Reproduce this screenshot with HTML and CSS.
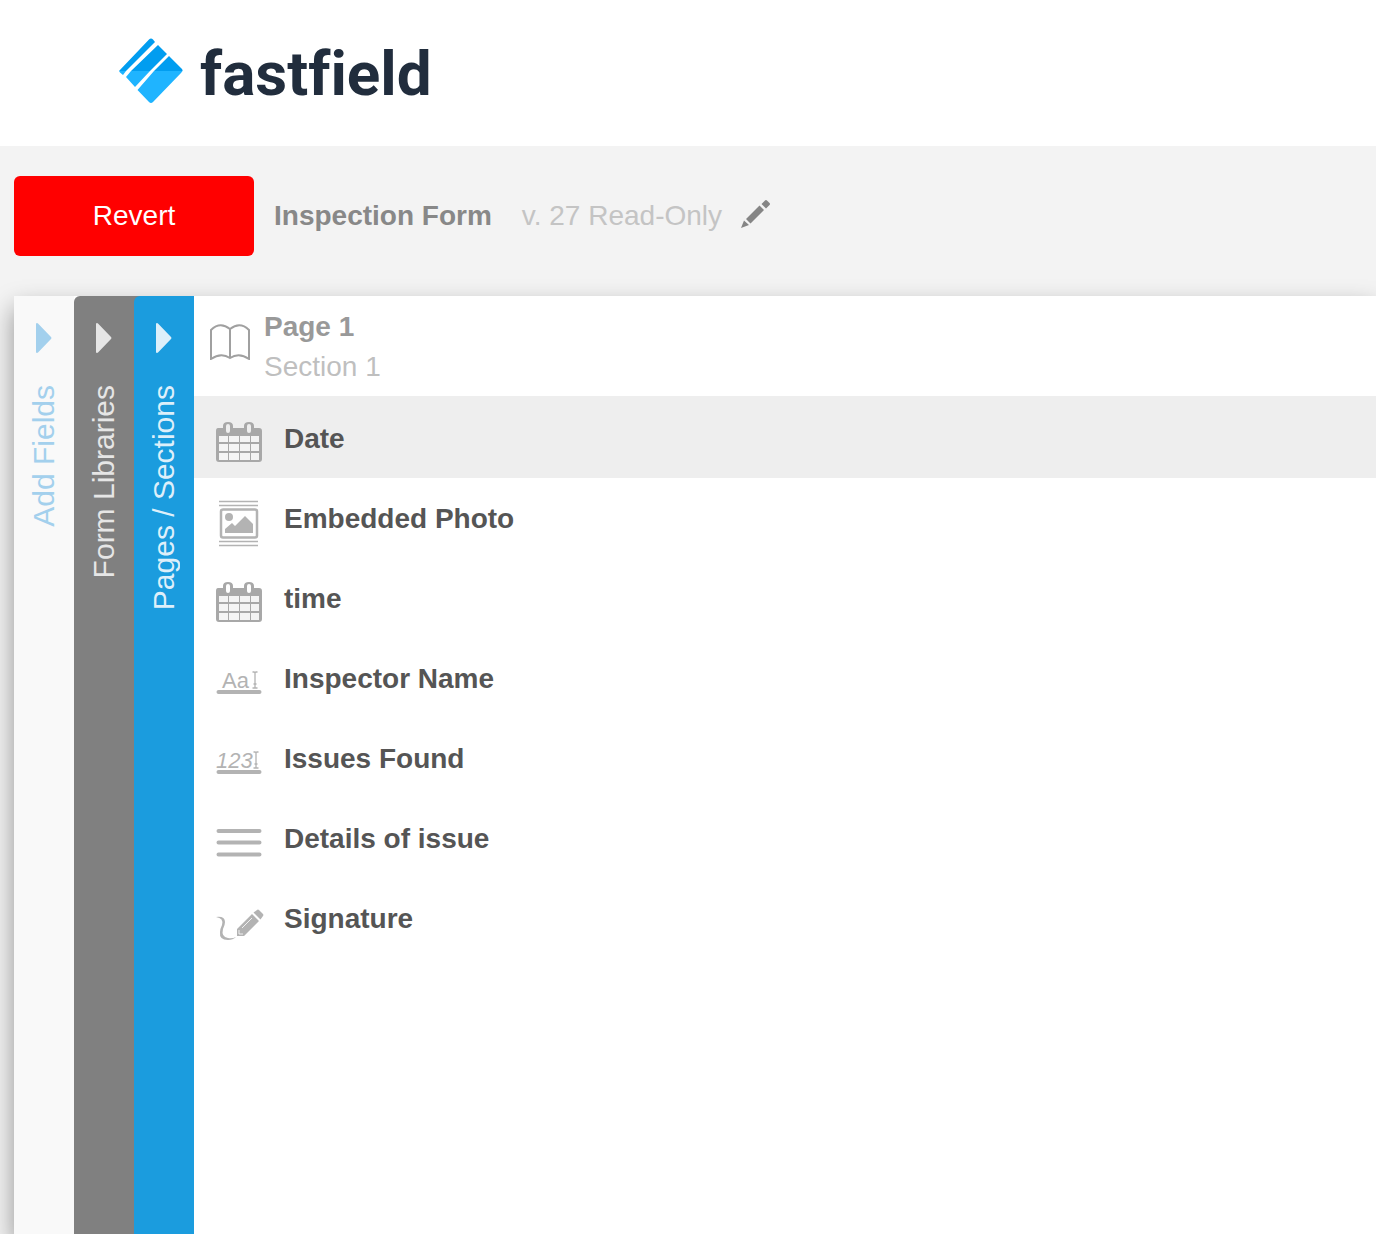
FILE: index.html
```html
<!doctype html>
<html lang="en">
    <head>
        <meta charset="UTF-8" />
        <meta name="viewport" content="width=device-width, initial-scale=1.0" />
        <title>Inspection Form</title>
        <link rel="stylesheet" href="styles.css">
    </head>
    <body>
        <!-- shared icons -->
        <svg class="sprite" width="0" height="0" aria-hidden="true">
            <symbol id="icon-calendar" viewBox="0 0 48 42">
                <path fill="#a8a8a8" fill-rule="evenodd" d="M3 7H8V5Q8 1 13 1T18 5V7H29V5Q29 1 34 1T39 5V7H44Q47 7 47 10V38Q47 41 44 41H4Q1 41 1 38V10Q1 7 3 7ZM11 5V10Q11 12 13 12T15 10V5Q15 3 13 3T11 5ZM32 5V10Q32 12 34 12T36 10V5Q36 3 34 3T32 5Z" />
                <path fill="#f4f4f4" d="M4 15h9v6H4zM14 15h10v6H14zM25 15h10v6H25zM36 15h8v6H36zM4 23h9v7H4zM14 23h10v7H14zM25 23h10v7H25zM36 23h8v7H36zM4 32h9v7H4zM14 32h10v7H14zM25 32h10v7H25zM36 32h8v7H36z" />
            </symbol>
            <symbol id="icon-arrow" viewBox="0 0 16 30">
                <path d="M0 1Q0 0 1 0L2 0.5L15 14Q16 15 15 16L2 29.5L1 30Q0 30 0 29Z" fill="currentColor" />
            </symbol>
            <symbol id="icon-cursor" viewBox="0 0 6 18">
                <path d="M0.5 1H2Q3 1 3 2Q3 1 4 1H5.5M3 2V16M0.5 17H2Q3 17 3 16Q3 17 4 17H5.5M1.5 13H4.5" fill="none" stroke="#b3b3b3" stroke-width="1.3" />
            </symbol>
        </svg>

        <header class="header">
            <a class="logo" href="#">
                <svg class="logo-mark" viewBox="0 0 64 66" aria-hidden="true">
                    <path fill="#019df0" d="M0 33L30 1.5Q32 -0.5 34 1.5L36 4L7 33ZM39 7L48 16L31 33H12ZM50 18L62 30Q64 31.5 63.5 33H35Z" />
                    <path fill="#1fb4ff" d="M0 33H7L4 37L1 34.5ZM12 33H31L16 49L7 39ZM35 33H63.5L62 35L34 64Q32 66 30 64L18.500 52Z" />
                </svg>
                <span class="logo-text">fastfield</span>
            </a>
        </header>

        <section class="toolbar">
            <button class="revert-button" type="button">Revert</button>
            <h1>Inspection Form</h1>
            <span class="version">v. 27 Read-Only</span>
            <button class="edit-button" type="button" aria-label="Edit name">
                <svg width="30" height="30" viewBox="0 0 30 30" fill="#858585">
                    <path d="M0 29L3 21.500L8 26ZM5 20L18.500 6.500L23 11L9.500 24.500ZM20.500 5L24 1.500Q25 0.500 26.500 2L28.500 4Q29.500 5 28.500 6L25 9.500Z" />
                </svg>
            </button>
        </section>

        <main class="builder">
            <button class="tab tab-fields" type="button">
                <svg class="tab-arrow"><use href="#icon-arrow" /></svg>
                <span class="tab-label">Add Fields</span>
            </button>
            <button class="tab tab-libraries" type="button">
                <svg class="tab-arrow"><use href="#icon-arrow" /></svg>
                <span class="tab-label">Form Libraries</span>
            </button>
            <button class="tab tab-pages" type="button">
                <svg class="tab-arrow"><use href="#icon-arrow" /></svg>
                <span class="tab-label">Pages / Sections</span>
            </button>

            <section class="form-page">
                <div class="page-header">
                    <svg class="book" viewBox="0 0 40 36" fill="none" stroke="#a0a0a0" stroke-width="2" aria-hidden="true">
                        <path d="M1 35V6Q10 -3 20 5Q30 -3 39 6V35Q29 28 20 34Q11 28 1 35ZM20 5V34" />
                    </svg>
                    <div>
                        <h2>Page 1</h2>
                        <p>Section 1</p>
                    </div>
                </div>
                <ul class="fields">
                    <li class="field selected">
                        <svg class="field-icon"><use href="#icon-calendar" width="48" height="42" y="2" /></svg>
                        <span>Date</span>
                    </li>
                    <li class="field">
                        <svg class="field-icon" viewBox="0 0 48 48">
                            <path d="M4 2.500H43M4 6.500H43M4 42.500H43M4 46.500H43" stroke="#b3b3b3" stroke-width="1.500" />
                            <rect x="6" y="10.500" width="36" height="28" rx="2" fill="none" stroke="#b3b3b3" stroke-width="2.500" />
                            <circle cx="14" cy="18" r="4" fill="#b3b3b3" />
                            <path d="M10 34V30L17 24L20 27L30 17L38 25V34Z" fill="#b3b3b3" />
                        </svg>
                        <span>Embedded Photo</span>
                    </li>
                    <li class="field">
                        <svg class="field-icon"><use href="#icon-calendar" width="48" height="42" y="2" /></svg>
                        <span>time</span>
                    </li>
                    <li class="field">
                        <svg class="field-icon" viewBox="0 0 48 48">
                            <text class="icon-text" x="7" y="29">Aa</text>
                            <use href="#icon-cursor" x="37" y="12" width="6" height="18" />
                            <path d="M3.500 33H44.500" stroke="#b3b3b3" stroke-width="4" stroke-linecap="round" />
                        </svg>
                        <span>Inspector Name</span>
                    </li>
                    <li class="field">
                        <svg class="field-icon" viewBox="0 0 48 48">
                            <text class="icon-text icon-italic" x="1" y="29">123</text>
                            <use href="#icon-cursor" x="38" y="12" width="6" height="18" />
                            <path d="M3.500 33H44.500" stroke="#b3b3b3" stroke-width="4" stroke-linecap="round" />
                        </svg>
                        <span>Issues Found</span>
                    </li>
                    <li class="field">
                        <svg class="field-icon" viewBox="0 0 48 48">
                            <path d="M3.500 12H44.500M3.500 23.500H44.500M3.500 35.500H44.500" stroke="#b3b3b3" stroke-width="4" stroke-linecap="round" />
                        </svg>
                        <span>Details of issue</span>
                    </li>
                    <li class="field">
                        <svg class="field-icon" viewBox="0 0 48 48">
                            <path d="M1 18Q10 17 10 23Q10 26 8 30Q6 38 13 39Q17 40 21 38Q18 41 13 41Q4 41 5 33Q5 30 7 26Q9 19 1 18Z" fill="#b3b3b3" />
                            <path d="M22 37V30L37 15L44 22L29 37ZM38.500 13.500L42 11Q43 10 44.500 11.500L47.500 14.500Q49 16 48 17L45.500 20.500Z" fill="#b3b3b3" />
                            <path d="M27 29L37 19M24 31V35H28" fill="none" stroke="#fff" stroke-width="0.8" />
                        </svg>
                        <span>Signature</span>
                    </li>
                </ul>
            </section>
        </main>
    </body>
</html>
```
FILE: styles.css
```css
* {
    box-sizing: border-box;
}
body {
    display: flex;
    flex-direction: column;
    min-height: 100vh;
    margin: 0;
    background-color: #f3f3f3;
    font-family: "Liberation Sans", Arial, sans-serif;
    font-size: 28px;
    line-height: 40px;
}
h1,
h2,
p {
    margin: 0;
    font-size: 28px;
}
button {
    border: none;
    padding: 0;
    background: transparent;
    font: inherit;
    cursor: pointer;
}
.sprite {
    position: absolute;
}
.header {
    display: flex;
    padding: 34px 119px 32px;
    background-color: #fff;
}
.logo {
    display: flex;
    align-items: center;
    gap: 17px;
    color: #212d3d;
    text-decoration: none;
}
.logo-mark {
    width: 64px;
    height: 66px;
    margin-bottom: 6px;
}
.logo-text {
    font-family: Roboto, sans-serif;
    font-size: 62px;
    font-weight: bold;
    font-variant-ligatures: none;
    line-height: 80px;
}
.toolbar {
    display: flex;
    align-items: center;
    padding: 30px 14px 40px;
    line-height: 42px;
}
.revert-button {
    width: 240px;
    height: 80px;
    margin-right: 20px;
    border-radius: 6px;
    background-color: #f00;
    color: #fff;
}
.toolbar h1 {
    margin-right: 30px;
    color: #888;
}
.version {
    margin-right: 19px;
    color: #c4c4c4;
}
.edit-button {
    display: flex;
    padding-bottom: 4px;
}
.builder {
    display: flex;
    flex: 1;
    margin-left: 14px;
    background-color: #fff;
    box-shadow: 0 12px 24px rgba(0, 0, 0, 0.4);
}
.tab {
    display: flex;
    flex-direction: column;
    align-items: center;
    gap: 32px;
    width: 60px;
    padding-top: 27px;
}
.tab-arrow {
    width: 16px;
    height: 30px;
}
.tab-label {
    writing-mode: vertical-rl;
    transform: rotate(180deg);
    font-size: 30px;
    line-height: 32px;
    white-space: nowrap;
}
.tab-fields {
    background-color: #f9f9f9;
    color: #a3d0ed;
}
/* runs on under the rounded corner of the next tab */
.tab-libraries {
    width: 66px;
    margin-right: -6px;
    padding-right: 6px;
    border-top-left-radius: 6px;
    background-color: #808080;
    color: #e6e6e6;
}
.tab-pages {
    position: relative;
    border-top-left-radius: 6px;
    background-color: #1b9cde;
    color: #ddeffa;
}
.form-page {
    flex: 1;
}
.page-header {
    display: flex;
    gap: 14px;
    padding: 11px 16px 9px;
    height: 100px;
}
.page-header h2 {
    color: #999;
}
.page-header p {
    color: #bfbfbf;
}
.book {
    width: 40px;
    height: 36px;
    margin-top: 17px;
}
.fields {
    margin: 0;
    padding: 0;
    border-top: 2px solid #eee;
    list-style: none;
}
.field {
    display: flex;
    gap: 21px;
    height: 80px;
    padding: 21px 21px 11px;
    color: #555;
    font-weight: bold;
}
.field.selected {
    background-color: #eee;
}
.field-icon {
    width: 48px;
    height: 48px;
    overflow: visible;
}
.icon-text {
    fill: #b3b3b3;
    font-size: 22px;
    font-weight: normal;
}
.icon-italic {
    font-style: italic;
}
```
